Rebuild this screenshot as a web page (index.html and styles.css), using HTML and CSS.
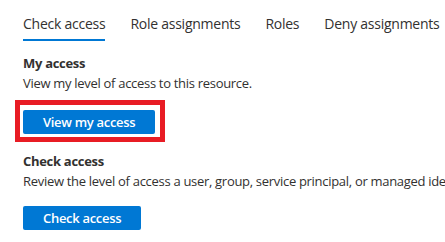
FILE: index.html
```html
<!DOCTYPE html>
<html>
<head>
    <title>Access control</title>
    <link rel="stylesheet" href="styles.css">
</head>
<body>
    <div class="tabs">
        <div class="tab active">Check access</div>
        <div class="tab">Role assignments</div>
        <div class="tab">Roles</div>
        <div class="tab">Deny assignments</div>
    </div>

    <div class="section first">
        <h2>My access</h2>
        <p>View my level of access to this resource.</p>
        <div class="highlight">
            <button class="primary-btn">View my access</button>
        </div>
    </div>

    <div class="section">
        <h2>Check access</h2>
        <p>Review the level of access a user, group, service principal, or managed identity has to this resource.</p>
        <button class="primary-btn">Check access</button>
    </div>
</body>
</html>
```

FILE: styles.css
```css
body {
    font-family: "Segoe UI", "Open Sans", sans-serif;
    font-size: 13px;
    letter-spacing: -0.3px;
    color: #323130;
    margin: 0;
    padding: 0 0 0 23px;
    background-color: white;
    overflow: hidden;
    white-space: nowrap;
}
.tabs {
    display: flex;
    gap: 25px;
}
.tab {
    font-size: 14px;
    line-height: 20px;
    letter-spacing: -0.25px;
    padding: 14px 0 5px;
    border-bottom: 2px solid transparent;
}
.tab.active {
    border-bottom-color: #0078d4;
}
.section.first {
    margin-top: 12px;
}
.section {
    margin-top: 9px;
}
h2 {
    font-size: 13px;
    font-weight: bold;
    line-height: 20px;
    margin: 0;
}
p {
    line-height: 20px;
    margin: 0 0 15px;
}
.first p {
    margin-bottom: 7px;
}
.highlight {
    display: inline-block;
    border: 5px solid #e81c24;
    padding: 5px 5px 3px 3px;
    margin-left: -8px;
}
.primary-btn {
    display: block;
    font-family: inherit;
    font-size: 13px;
    font-weight: 600;
    letter-spacing: -0.3px;
    height: 24px;
    padding: 0 20px;
    border: none;
    border-radius: 2px;
    background-color: #0078d4;
    color: white;
    cursor: pointer;
}
```
